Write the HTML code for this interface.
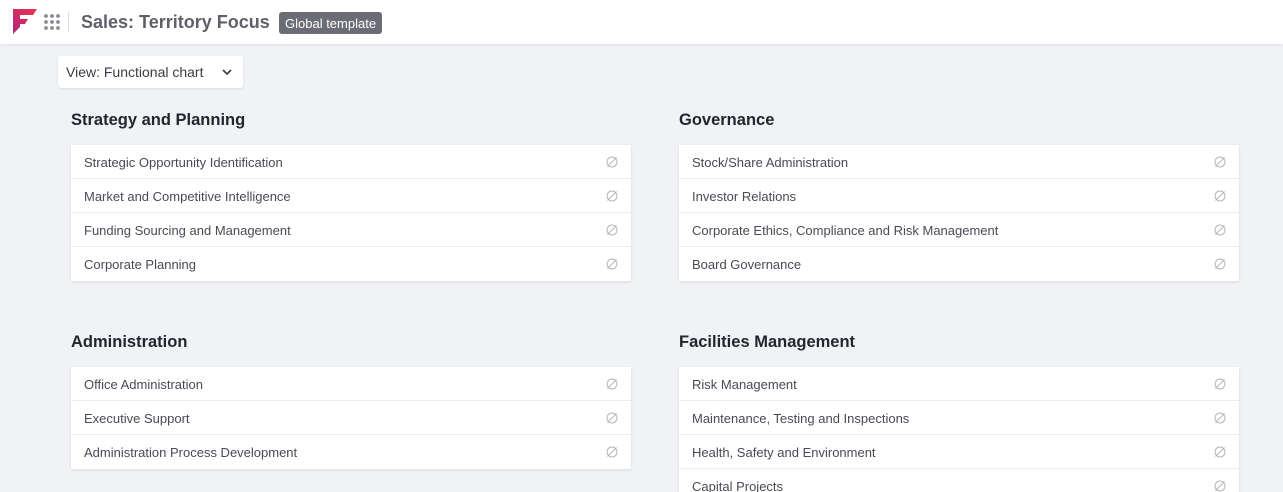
<!DOCTYPE html>
<html><head><style>
*{margin:0;padding:0;box-sizing:border-box}
html,body{width:1283px;height:492px;overflow:hidden}
body{background:#f1f2f6;font-family:"Liberation Sans",sans-serif;position:relative}
.hdr{position:absolute;left:0;top:0;width:1283px;height:44px;background:#fff;box-shadow:0 1px 3px rgba(0,0,0,.08)}
.title{position:absolute;left:81px;top:12px;font-size:18px;font-weight:bold;color:#5f606a}
.badge{position:absolute;left:279px;top:12px;height:22px;padding:0 6px;background:#6b6c75;color:#fff;font-size:13px;line-height:23px;border-radius:3px}
.sep{position:absolute;left:68px;top:12px;width:1px;height:20px;background:#ddd}
.view{position:absolute;left:58px;top:56px;width:185px;height:32px;background:#fff;border-radius:3px;box-shadow:0 1px 2px rgba(0,0,0,.1);font-size:14px;color:#3a3b44;line-height:33px;padding-left:8px}
h2{position:absolute;font-size:16.5px;font-weight:bold;color:#24252d}
.card{position:absolute;width:560px;background:#fff;box-shadow:0 1px 3px rgba(0,0,0,.1)}
.row{height:34px;border-bottom:1px solid #ececef;font-size:13px;color:#494a54;line-height:35px;padding-left:13px;position:relative}
.row:last-child{border-bottom:none}
.row svg{position:absolute;right:13px;top:11px}
</style></head><body>
<div class="hdr">
<svg style="position:absolute;left:13px;top:9px" width="24" height="25" viewBox="0 0 24 25"><defs><linearGradient id="g" x1="0" y1="1" x2="1" y2="0"><stop offset="0" stop-color="#b0287a"/><stop offset="1" stop-color="#f0304f"/></linearGradient></defs><path d="M0 0H24L20 6H7V10H15L12 15H7V18L0 25Z" fill="url(#g)"/></svg>
<svg style="position:absolute;left:44px;top:14px" width="16" height="16"><g fill="#8a8b94"><circle cx="2" cy="2" r="1.9"/><circle cx="8" cy="2" r="1.9"/><circle cx="14" cy="2" r="1.9"/><circle cx="2" cy="8" r="1.9"/><circle cx="8" cy="8" r="1.9"/><circle cx="14" cy="8" r="1.9"/><circle cx="2" cy="14" r="1.9"/><circle cx="8" cy="14" r="1.9"/><circle cx="14" cy="14" r="1.9"/></g></svg>
<div class="sep"></div>
<div class="title">Sales: Territory Focus</div>
<div class="badge">Global template</div>
</div>
<div class="view">View: Functional chart <svg style="position:absolute;left:164px;top:13px" width="10" height="7"><path d="M1 1L5 5L9 1" stroke="#3a3b44" stroke-width="1.6" fill="none"/></svg></div>

<h2 style="left:71px;top:111px">Strategy and Planning</h2>
<h2 style="left:679px;top:111px">Governance</h2>
<h2 style="left:71px;top:333px">Administration</h2>
<h2 style="left:679px;top:333px">Facilities Management</h2>

<div class="card" style="left:71px;top:145px">
<div class="row">Strategic Opportunity Identification<svg width="12" height="12"><circle cx="6" cy="6" r="5" stroke="#b5b5bb" fill="none" stroke-width="1"/><path d="M1.5 10.5L10.5 1.5" stroke="#b5b5bb" stroke-width="1"/></svg></div>
<div class="row">Market and Competitive Intelligence<svg width="12" height="12"><circle cx="6" cy="6" r="5" stroke="#b5b5bb" fill="none" stroke-width="1"/><path d="M1.5 10.5L10.5 1.5" stroke="#b5b5bb" stroke-width="1"/></svg></div>
<div class="row">Funding Sourcing and Management<svg width="12" height="12"><circle cx="6" cy="6" r="5" stroke="#b5b5bb" fill="none" stroke-width="1"/><path d="M1.5 10.5L10.5 1.5" stroke="#b5b5bb" stroke-width="1"/></svg></div>
<div class="row">Corporate Planning<svg width="12" height="12"><circle cx="6" cy="6" r="5" stroke="#b5b5bb" fill="none" stroke-width="1"/><path d="M1.5 10.5L10.5 1.5" stroke="#b5b5bb" stroke-width="1"/></svg></div>
</div>
<div class="card" style="left:679px;top:145px">
<div class="row">Stock/Share Administration<svg width="12" height="12"><circle cx="6" cy="6" r="5" stroke="#b5b5bb" fill="none" stroke-width="1"/><path d="M1.5 10.5L10.5 1.5" stroke="#b5b5bb" stroke-width="1"/></svg></div>
<div class="row">Investor Relations<svg width="12" height="12"><circle cx="6" cy="6" r="5" stroke="#b5b5bb" fill="none" stroke-width="1"/><path d="M1.5 10.5L10.5 1.5" stroke="#b5b5bb" stroke-width="1"/></svg></div>
<div class="row">Corporate Ethics, Compliance and Risk Management<svg width="12" height="12"><circle cx="6" cy="6" r="5" stroke="#b5b5bb" fill="none" stroke-width="1"/><path d="M1.5 10.5L10.5 1.5" stroke="#b5b5bb" stroke-width="1"/></svg></div>
<div class="row">Board Governance<svg width="12" height="12"><circle cx="6" cy="6" r="5" stroke="#b5b5bb" fill="none" stroke-width="1"/><path d="M1.5 10.5L10.5 1.5" stroke="#b5b5bb" stroke-width="1"/></svg></div>
</div>
<div class="card" style="left:71px;top:367px">
<div class="row">Office Administration<svg width="12" height="12"><circle cx="6" cy="6" r="5" stroke="#b5b5bb" fill="none" stroke-width="1"/><path d="M1.5 10.5L10.5 1.5" stroke="#b5b5bb" stroke-width="1"/></svg></div>
<div class="row">Executive Support<svg width="12" height="12"><circle cx="6" cy="6" r="5" stroke="#b5b5bb" fill="none" stroke-width="1"/><path d="M1.5 10.5L10.5 1.5" stroke="#b5b5bb" stroke-width="1"/></svg></div>
<div class="row">Administration Process Development<svg width="12" height="12"><circle cx="6" cy="6" r="5" stroke="#b5b5bb" fill="none" stroke-width="1"/><path d="M1.5 10.5L10.5 1.5" stroke="#b5b5bb" stroke-width="1"/></svg></div>
</div>
<div class="card" style="left:679px;top:367px">
<div class="row">Risk Management<svg width="12" height="12"><circle cx="6" cy="6" r="5" stroke="#b5b5bb" fill="none" stroke-width="1"/><path d="M1.5 10.5L10.5 1.5" stroke="#b5b5bb" stroke-width="1"/></svg></div>
<div class="row">Maintenance, Testing and Inspections<svg width="12" height="12"><circle cx="6" cy="6" r="5" stroke="#b5b5bb" fill="none" stroke-width="1"/><path d="M1.5 10.5L10.5 1.5" stroke="#b5b5bb" stroke-width="1"/></svg></div>
<div class="row">Health, Safety and Environment<svg width="12" height="12"><circle cx="6" cy="6" r="5" stroke="#b5b5bb" fill="none" stroke-width="1"/><path d="M1.5 10.5L10.5 1.5" stroke="#b5b5bb" stroke-width="1"/></svg></div>
<div class="row">Capital Projects<svg width="12" height="12"><circle cx="6" cy="6" r="5" stroke="#b5b5bb" fill="none" stroke-width="1"/><path d="M1.5 10.5L10.5 1.5" stroke="#b5b5bb" stroke-width="1"/></svg></div>
</div>
</body></html>
